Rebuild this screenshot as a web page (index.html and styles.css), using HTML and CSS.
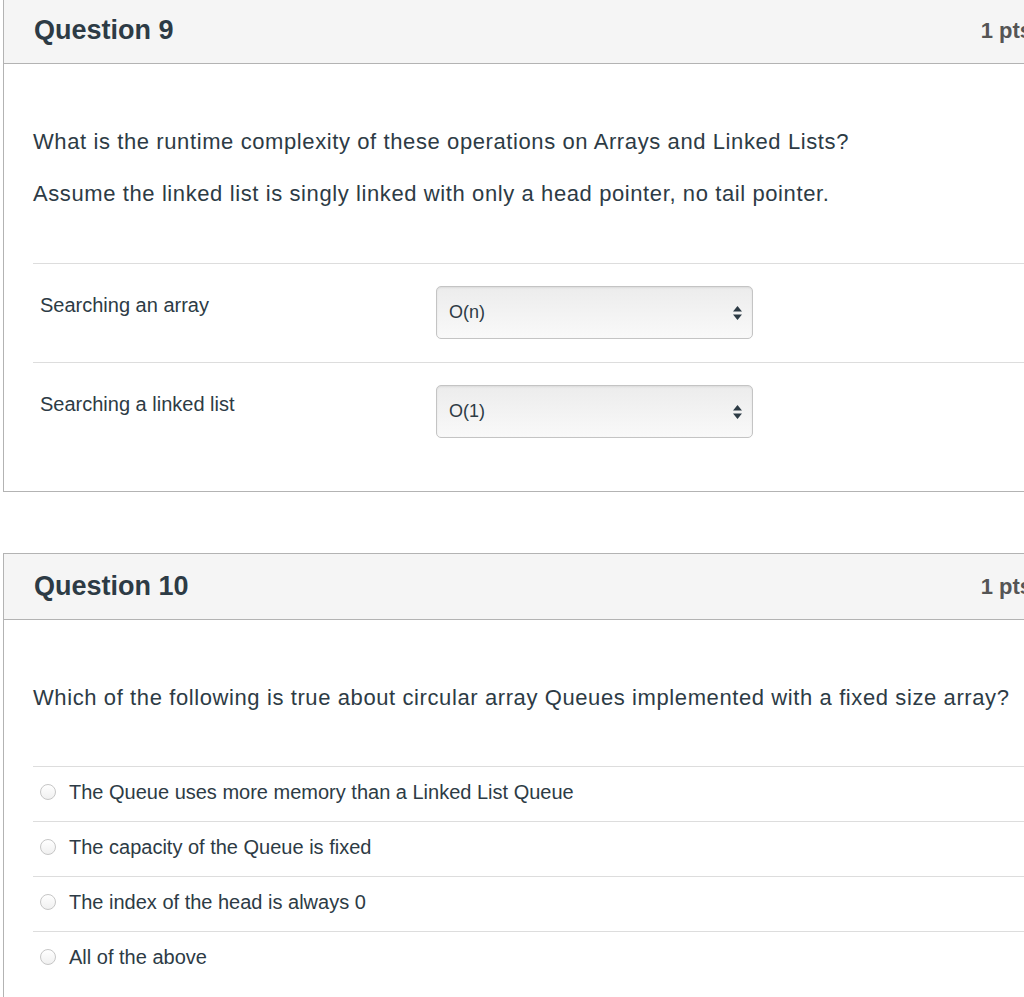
FILE: index.html
```html
<!DOCTYPE html>
<html lang="en">
<head>
  <meta charset="UTF-8">
  <meta name="viewport" content="width=device-width, initial-scale=1.0">
  <title>Quiz</title>
  <link rel="stylesheet" href="styles.css">
</head>
<body>
  <div class="quiz">

    <div class="question">
      <div class="question-header">
        <h2>Question 9</h2>
        <span class="points">1 pts</span>
      </div>
      <div class="question-body">
        <div class="question-text">
          <p>What is the runtime complexity of these operations on Arrays and Linked Lists?</p>
          <p>Assume the linked list is singly linked with only a head pointer, no tail pointer.</p>
        </div>
        <div class="match-row">
          <div class="match-label">Searching an array</div>
          <div class="select-box">
            <span>O(n)</span>
            <svg width="9" height="14" viewBox="0 0 9 14"><path d="M4.5 0L9 5.5H0z M4.5 14L0 8.5H9z" fill="#2d3b45"/></svg>
          </div>
        </div>
        <div class="match-row">
          <div class="match-label">Searching a linked list</div>
          <div class="select-box">
            <span>O(1)</span>
            <svg width="9" height="14" viewBox="0 0 9 14"><path d="M4.5 0L9 5.5H0z M4.5 14L0 8.5H9z" fill="#2d3b45"/></svg>
          </div>
        </div>
      </div>
    </div>

    <div class="question">
      <div class="question-header">
        <h2>Question 10</h2>
        <span class="points">1 pts</span>
      </div>
      <div class="question-body">
        <div class="question-text short">
          <p>Which of the following is true about circular array Queues implemented with a fixed size array?</p>
        </div>
        <div class="answer"><span class="radio"></span>The Queue uses more memory than a Linked List Queue</div>
        <div class="answer"><span class="radio"></span>The capacity of the Queue is fixed</div>
        <div class="answer"><span class="radio"></span>The index of the head is always 0</div>
        <div class="answer"><span class="radio"></span>All of the above</div>
      </div>
    </div>

  </div>
</body>
</html>
```

FILE: styles.css
```css
body {
  margin: 0;
  padding: 0;
  background-color: #fff;
  color: #2d3b45;
  font-family: 'Liberation Sans', Arial, sans-serif;
  overflow: hidden;
}

.quiz {
  width: 1060px;
  margin: -3px 0 0 3px;
}

.question {
  border: 1px solid #b3b3b3;
  margin-bottom: 61px;
}

.question-header {
  height: 65px;
  display: flex;
  align-items: center;
  justify-content: space-between;
  padding: 0 30px;
  background-color: #f5f5f5;
  border-bottom: 1px solid #b3b3b3;
}

.question-header h2 {
  margin: 0;
  font-size: 27px;
  font-weight: bold;
  color: #2d3b45;
}

.points {
  font-size: 22px;
  font-weight: bold;
  color: #555;
}

.question-body {
  padding: 0 0 30px 29px;
}

.question-text {
  padding: 63px 0 32px;
}

.question-text.short {
  padding-bottom: 31px;
}

.question-text p {
  margin: 0 0 22px;
  font-size: 22px;
  line-height: 30px;
  letter-spacing: 0.6px;
}

.match-row {
  display: flex;
  align-items: flex-start;
  border-top: 1px solid #ddd;
  padding: 22px 0 23px;
}

.match-label {
  width: 396px;
  padding-left: 7px;
  margin-top: 7px;
  font-size: 20px;
  line-height: 24px;
}

.select-box {
  width: 293px;
  height: 51px;
  display: flex;
  align-items: center;
  justify-content: space-between;
  padding: 0 10px 0 12px;
  border: 1px solid #c4c4c4;
  border-radius: 5px;
  background: linear-gradient(#ececec, #f9f9f9);
  box-shadow: inset 0 1px 2px rgba(0, 0, 0, 0.08);
  font-size: 18px;
}

.answer {
  display: flex;
  align-items: center;
  height: 55px;
  box-sizing: border-box;
  padding-bottom: 4px;
  border-top: 1px solid #ddd;
  font-size: 20px;
}

.radio {
  width: 16px;
  height: 16px;
  box-sizing: border-box;
  border: 1px solid #c6c6c6;
  border-radius: 50%;
  background: linear-gradient(#fff, #f0f0f0);
  margin: 0 13px 0 7px;
}
```
